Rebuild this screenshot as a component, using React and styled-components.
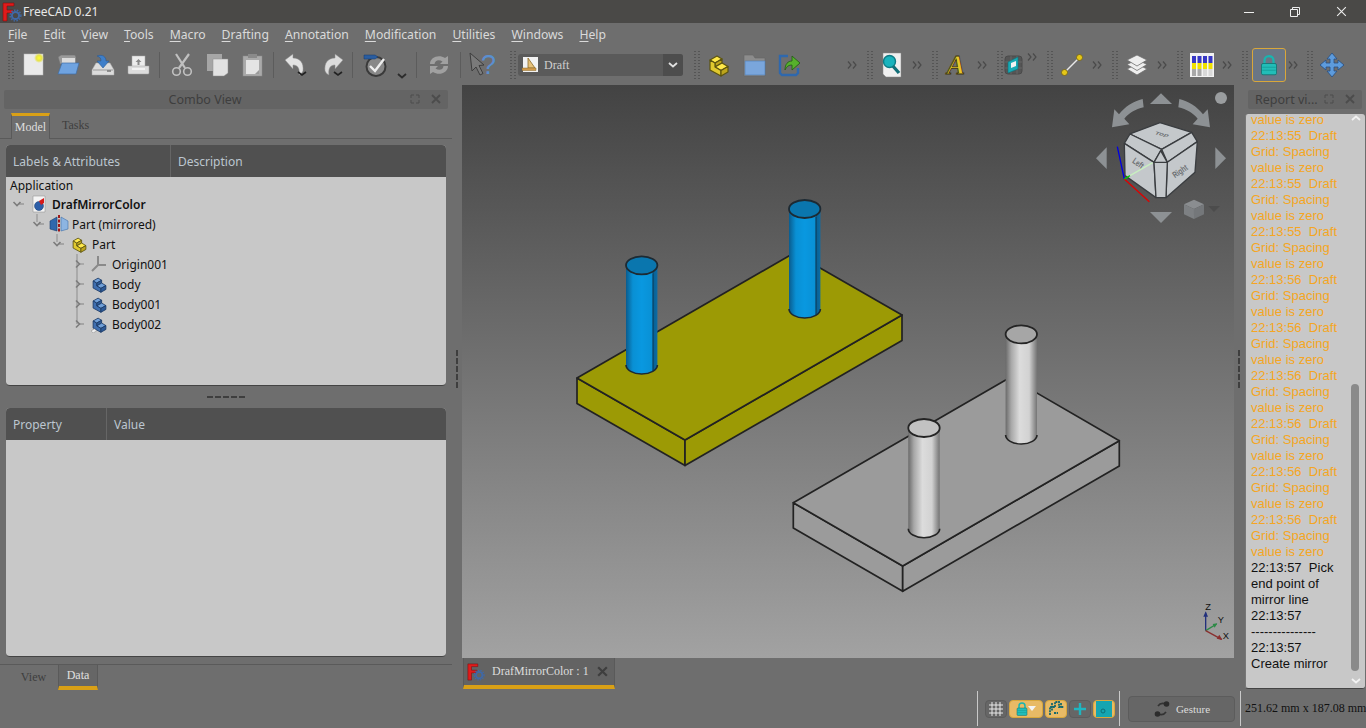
import styled, { createGlobalStyle } from "styled-components";

const GlobalStyle = createGlobalStyle`
  html, body {
    margin: 0;
    padding: 0;
    height: 100%;
    overflow: hidden;
  }
  body {
    background: #6e6e6e;
    font-family: "Noto Sans", "Open Sans", sans-serif;
  }
`;

const Page = styled.div`
  width: 1366px;
  height: 728px;
  display: flex;
  flex-direction: column;
  overflow: hidden;
  background: #6e6e6e;
`;

const TitleBar = styled.div`
  height: 23px;
  flex: none;
  display: flex;
  align-items: center;
  background: #4a4947;
  color: #e8e8e8;
  font-size: 12px;
`;

const TitleLogo = styled.div`
  width: 23px;
  display: flex;
  padding-left: 2px;
  box-sizing: border-box;
`;

const WindowButtons = styled.div`
  margin-left: auto;
  padding-right: 2px;
  display: flex;
`;

const WindowButton = styled.div`
  width: 46px;
  height: 23px;
  display: flex;
  align-items: center;
  justify-content: center;
`;

const MenuBar = styled.div`
  height: 22px;
  flex: none;
  display: flex;
  align-items: center;
  padding-left: 8px;
  gap: 16px;
  color: #dadada;
  font-size: 12.2px;
  u {
    text-underline-offset: 2px;
  }
`;

const ToolBar = styled.div`
  height: 40px;
  flex: none;
  display: flex;
  align-items: center;
  padding-left: 8px;
`;

const ToolGroup = styled.div`
  width: ${({ $w }) => $w}px;
  flex: none;
  height: 100%;
  display: flex;
  align-items: center;
  padding-right: 8px;
  box-sizing: border-box;
`;

const Grip = styled.div`
  width: 6px;
  height: 29px;
  flex: none;
  margin-right: 1px;
  background-image: linear-gradient(#555 50%, transparent 50%),
    linear-gradient(#555 50%, transparent 50%);
  background-size: 2px 3px;
  background-position: 0 0, 4px 0;
  background-repeat: repeat-y;
`;

const ToolButton = styled.div`
  width: ${({ $w }) => $w || 35}px;
  height: 33px;
  flex: none;
  display: flex;
  align-items: ${({ $low }) => ($low ? "flex-end" : "center")};
  justify-content: center;
  box-sizing: border-box;
  border-radius: 3px;
  ${({ $low }) => $low && "padding-bottom: 3px;"}
  ${({ $active }) =>
    $active &&
    `
    background: #6b7685;
    border: 1px solid #d9a73a;
    height: 34px;
    margin-left: 3px;
  `}
`;

const ToolSep = styled.div`
  width: 9px;
  height: 26px;
  flex: none;
  display: flex;
  justify-content: center;
  &::before {
    content: "";
    width: 1px;
    background: #5c5c5c;
  }
`;

const MoreChevrons = styled.div`
  margin-left: auto;
  width: 14px;
  flex: none;
  display: flex;
  justify-content: center;
  margin-bottom: ${({ $raised }) => ($raised ? 16 : 0)}px;
`;

const WorkbenchCombo = styled.div`
  width: 165px;
  height: 22px;
  flex: none;
  margin-left: 1px;
  display: flex;
  align-items: center;
  background: #5a5a5a;
  border-radius: 3px;
  color: #cfcfcf;
  font: 12px "Liberation Serif", serif;
  padding-left: 4px;
  box-sizing: border-box;
  gap: 6px;
`;

const ComboArrow = styled.div`
  margin-left: auto;
  width: 20px;
  height: 22px;
  display: flex;
  align-items: center;
  justify-content: center;
  background: #4d4d4d;
  border-radius: 0 3px 3px 0;
`;

const Main = styled.div`
  flex: 1;
  min-height: 0;
  display: flex;
`;

const LeftDock = styled.div`
  width: 456px;
  flex: none;
  display: flex;
  flex-direction: column;
  padding-top: 5px;
  box-sizing: border-box;
`;

const DockTitle = styled.div`
  height: 19px;
  flex: none;
  margin: ${({ $margin }) => $margin};
  display: flex;
  align-items: center;
  justify-content: ${({ $center }) => ($center ? "center" : "flex-start")};
  position: relative;
  background: #646464;
  border-radius: 2px;
  color: #3e3e3e;
  font-size: 12.5px;
  padding-left: ${({ $center }) => ($center ? 0 : 7)}px;
  padding-right: ${({ $center }) => ($center ? 42 : 0)}px;
`;

const DockButtons = styled.div`
  position: absolute;
  right: 6px;
  top: 3px;
  display: flex;
  gap: 9px;
`;

const TabStrip = styled.div`
  height: 25px;
  flex: none;
  margin: 4px 4px 6px 0;
  padding-left: 11px;
  display: flex;
  gap: 1px;
  border-bottom: 1px solid #5a5a5a;
`;

const TopTab = styled.div`
  width: 39px;
  display: flex;
  align-items: center;
  justify-content: center;
  box-sizing: border-box;
  font: 12px "Liberation Serif", serif;
  color: ${({ $active }) => ($active ? "#dedede" : "#3e3e3e")};
  ${({ $active }) =>
    $active &&
    `
    border-top: 3px solid #d9a016;
    border-left: 1px solid #5a5a5a;
    border-right: 1px solid #5a5a5a;
    margin-bottom: -1px;
    background: #6e6e6e;
  `}
  ${({ $active }) => !$active && "margin-left: 5px;"}
`;

const TablePanel = styled.div`
  flex: none;
  height: ${({ $h }) => $h}px;
  margin: 0 10px 0 6px;
  display: flex;
  flex-direction: column;
  background: #c8c8c8;
  border-radius: 4px;
  border-bottom: 1px solid #444;
  box-sizing: border-box;
  overflow: hidden;
`;

const TableHeader = styled.div`
  height: 32px;
  flex: none;
  display: flex;
  background: #505050;
  color: #bcc6cf;
  font-size: 12px;
`;

const HeaderCell = styled.div`
  width: ${({ $w }) => ($w ? `${$w}px` : "auto")};
  display: flex;
  align-items: center;
  padding-left: 7px;
  box-sizing: border-box;
  border-right: ${({ $w }) => ($w ? "1px solid #666" : "none")};
`;

const TreeBody = styled.div`
  color: #111;
  font-size: 12px;
`;

const TreeRow = styled.div`
  height: ${({ $level }) => ($level === undefined ? 17 : 20)}px;
  display: flex;
  align-items: center;
  padding-left: ${({ $level }) => ($level === undefined ? 4 : 3 + $level * 20)}px;
  font-weight: ${({ $doc }) => ($doc ? 600 : 400)};
`;

const RowIcon = styled.div`
  width: 20px;
  height: 20px;
  flex: none;
  display: flex;
  align-items: center;
  justify-content: center;
  margin-right: 3px;
`;

const PanelSplitter = styled.div`
  height: 22px;
  flex: none;
  display: flex;
  align-items: center;
  justify-content: center;
  padding-right: 4px;
  &::before {
    content: "";
    width: 38px;
    height: 2px;
    background: repeating-linear-gradient(to right, #3e3e3e 0 6px, transparent 6px 8px);
  }
`;

const BottomTabs = styled.div`
  height: 26px;
  flex: none;
  margin-top: 7px;
  padding-left: 9px;
  display: flex;
  border-top: 1px solid #5a5a5a;
  margin-right: 4px;
  box-sizing: border-box;
`;

const BottomTab = styled.div`
  width: ${({ $active }) => ($active ? 40 : 49)}px;
  display: flex;
  align-items: center;
  justify-content: center;
  box-sizing: border-box;
  font: 12px "Liberation Serif", serif;
  color: ${({ $active }) => ($active ? "#e0e0e0" : "#3e3e3e")};
  ${({ $active }) =>
    $active &&
    `
    border-left: 1px solid #5a5a5a;
    border-right: 1px solid #5a5a5a;
    border-bottom: 4px solid #d9a016;
    background: #666;
  `}
`;

const DockSplitter = styled.div`
  width: ${({ $w }) => $w}px;
  flex: none;
  display: flex;
  align-items: center;
  padding: ${({ $pad }) => $pad};
  box-sizing: border-box;
  &::before {
    content: "";
    width: 2px;
    height: 38px;
    margin-bottom: 37px;
    background: repeating-linear-gradient(to bottom, #3e3e3e 0 6px, transparent 6px 8px);
  }
`;

const Center = styled.div`
  width: 772px;
  flex: none;
  display: flex;
  flex-direction: column;
`;

const Viewport = styled.div`
  height: 573px;
  flex: none;
  background: linear-gradient(#434343, #a2a2a2);
  svg {
    display: block;
  }
`;

const ViewTabs = styled.div`
  flex: 1;
  display: flex;
  padding-left: 1px;
`;

const ViewTab = styled.div`
  width: 152px;
  display: flex;
  align-items: center;
  box-sizing: border-box;
  padding: 0 5px 0 3px;
  background: #636363;
  border-bottom: 4px solid #d9a016;
  border-left: 1px solid #5a5a5a;
  border-right: 1px solid #5a5a5a;
  color: #dcdcdc;
  font: 12px "Liberation Serif", serif;
  white-space: nowrap;
  gap: 7px;
`;

const ViewTabLogo = styled.div`
  flex: none;
  display: flex;
`;

const ViewTabClose = styled.div`
  margin-left: auto;
  display: flex;
`;

const RightDock = styled.div`
  width: 121px;
  flex: none;
  display: flex;
  flex-direction: column;
  padding-top: 5px;
  box-sizing: border-box;
`;

const ReportBody = styled.div`
  flex: none;
  position: relative;
  height: 575px;
  margin: 5px 1px 0 0;
  padding-left: 5px;
  background: #c8c8c8;
  border-radius: 3px;
  border-bottom: 1px solid #444;
  border-left: 1px solid #777;
  box-sizing: border-box;
  overflow: hidden;
  font: 13px/16px "Liberation Sans", Arial, sans-serif;
`;

const LogList = styled.div`
  margin-top: -2px;
`;

const LogLine = styled.div`
  white-space: pre;
  color: ${({ $warn }) => ($warn ? "#f5a623" : "#111")};
`;

const ScrollThumb = styled.div`
  position: absolute;
  right: 6px;
  top: 270px;
  width: 8px;
  height: 287px;
  background: #8a8a8a;
  border-radius: 4px;
`;

const ScrollArrow = styled.div`
  position: absolute;
  right: 4px;
  ${({ $down }) => ($down ? "bottom: 4px;" : "top: 1px; transform: rotate(180deg);")}
  display: flex;
`;

const StatusBar = styled.div`
  height: 39px;
  flex: none;
  display: flex;
  align-items: center;
  justify-content: flex-end;
`;

const StatusSep = styled.div`
  width: 1px;
  height: 35px;
  flex: none;
  margin: ${({ $margin }) => $margin};
  background: #c9c9c9;
`;

const StatusButton = styled.div`
  width: ${({ $w }) => $w || 22}px;
  height: 18px;
  flex: none;
  margin-right: 2px;
  display: flex;
  align-items: center;
  justify-content: center;
  box-sizing: border-box;
  border-radius: 4px;
  border: 1px solid ${({ $on }) => ($on ? "#d9a73a" : "#5c5c5c")};
  background: ${({ $on }) => ($on ? "#e8ba66" : "#666")};
`;

const GestureButton = styled.div`
  width: 107px;
  height: 26px;
  flex: none;
  display: flex;
  align-items: center;
  justify-content: center;
  gap: 5px;
  box-sizing: border-box;
  border: 1px solid #5c5c5c;
  border-radius: 4px;
  background: #666;
  color: #dcdcdc;
  font: 11px "Liberation Serif", serif;
`;

const SizeLabel = styled.div`
  width: 121px;
  flex: none;
  color: #111;
  white-space: nowrap;
  font: 12px "Liberation Serif", serif;
`;

/* icons */

const FreeCadLogo = ({ size = 20 }) => (
  <svg width={size} height={size} viewBox="0 0 20 20">
    <path d="M1 1h11v3H5v4h6v3H5v8H1z" fill="#e01b1b" stroke="#7d0d0d" strokeWidth=".6" />
    <circle cx="13.5" cy="13.5" r="3.6" fill="none" stroke="#3f69a8" strokeWidth="2" />
    <circle cx="13.5" cy="13.5" r="5.4" fill="none" stroke="#3f69a8" strokeWidth="1.4" strokeDasharray="1.6 1.3" />
  </svg>
);

const NewIcon = () => (
  <svg width="24" height="24" viewBox="0 0 24 24">
    <defs>
      <radialGradient id="glow">
        <stop offset="0" stopColor="#ffff30" />
        <stop offset=".55" stopColor="#e6e24a" />
        <stop offset="1" stopColor="#e6e24a" stopOpacity="0" />
      </radialGradient>
    </defs>
    <rect x="3" y="1" width="19" height="21" fill="#eaeaea" stroke="#bbb" strokeWidth=".5" />
    <circle cx="18" cy="5" r="5" fill="url(#glow)" />
  </svg>
);

const OpenIcon = () => (
  <svg width="24" height="24" viewBox="0 0 24 24">
    <path d="M2 4l3-2h14l1 2v7H4z" fill="#9a9a9a" stroke="#6e6e6e" strokeWidth=".6" />
    <path d="M6 5h13v5H6z" fill="#dcdcdc" />
    <path d="M6 10h17l-3 11H2z" fill="#6fa3e0" stroke="#3f6ea8" strokeWidth=".7" />
  </svg>
);

const SaveIcon = () => (
  <svg width="24" height="24" viewBox="0 0 24 24">
    <path d="M5 10h14l4 7v5H1v-5z" fill="#dcdcdc" stroke="#aaa" strokeWidth=".5" />
    <path d="M2 17h20" stroke="#999" />
    <path d="M16 18h4" stroke="#777" strokeWidth="1.5" />
    <path d="M6 3c6-2 9 1 9 5h3l-6 7-6-7h4c0-3-1-4-4-5z" fill="#3f7fc9" stroke="#2a5a96" strokeWidth=".6" />
  </svg>
);

const PrintIcon = () => (
  <svg width="24" height="24" viewBox="0 0 24 24">
    <rect x="6" y="3" width="13" height="12" fill="#ececec" stroke="#aaa" strokeWidth=".5" />
    <path d="M12.5 6l3 3h-2v3h-2V9h-2z" fill="#8a8a8a" />
    <path d="M2 13h21v7a1 1 0 0 1-1 1H3a1 1 0 0 1-1-1z" fill="#dcdcdc" stroke="#a0a0a0" strokeWidth=".5" />
    <path d="M6 15h13v2H6z" fill="#f2f2f2" />
  </svg>
);

const CutIcon = () => (
  <svg width="24" height="24" viewBox="0 0 24 24" fill="none" stroke="#c0c0c0">
    <path d="M6 1l9 14M19 1l-10 14" strokeWidth="2.2" />
    <circle cx="6.5" cy="18.5" r="3.8" strokeWidth="1.6" />
    <circle cx="17.5" cy="18.5" r="3.8" strokeWidth="1.6" />
  </svg>
);

const CopyIcon = () => (
  <svg width="24" height="24" viewBox="0 0 24 24">
    <rect x="2" y="1" width="15" height="17" fill="#a6a6a6" />
    <path d="M8 6h15v14l-4 3H8z" fill="#e2e2e2" stroke="#8c8c8c" strokeWidth=".5" />
  </svg>
);

const PasteIcon = () => (
  <svg width="24" height="24" viewBox="0 0 24 24">
    <rect x="3" y="3" width="19" height="20" fill="#aaa" stroke="#8c8c8c" strokeWidth=".5" />
    <rect x="8" y="1" width="9" height="4" fill="#8a8a8a" />
    <rect x="6" y="7" width="13" height="14" fill="#e4e4e4" />
    <path d="M15 21l4-4v4z" fill="#9a9a9a" />
  </svg>
);

const HistoryIcon = ({ flip }) => (
  <svg width="24" height="24" viewBox="0 0 24 24">
    <g transform={flip ? "translate(25 0) scale(-1 1)" : undefined}>
      <path
        d="M1 7l8-6v4c7 0 11 5 10 13-1 2-2 3-4 4 1-6-1-10-6-10v4z"
        fill={flip ? "#dcdcdc" : "#e2e2e2"}
        stroke="#8a8a8a"
        strokeWidth=".5"
      />
    </g>
    <path d={flip ? "M15 19l4 3 4-3" : "M14 19l4 3 4-3"} fill="none" stroke="#222" strokeWidth="1.6" />
  </svg>
);

const CheckIcon = () => (
  <svg width="24" height="24" viewBox="0 0 24 24">
    <circle cx="13" cy="13.5" r="9.5" fill="#888" stroke="#3a3a3a" strokeWidth="2" />
    <path d="M7 13l5 5 9-12" fill="none" stroke="#eee" strokeWidth="2.4" />
    <path d="M1 2h11l3 2-3 2H1z" fill="#2a5da0" stroke="#173a6c" strokeWidth=".5" />
  </svg>
);

const SmallChevron = ({ color = "#2c2c2c", w = 10 }) => (
  <svg width={w} height="6" viewBox="0 0 10 6">
    <path d="M1 1l4 3.5L9 1" fill="none" stroke={color} strokeWidth="1.8" />
  </svg>
);

const RefreshIcon = () => (
  <svg width="24" height="24" viewBox="0 0 24 24" fill="#a0a0a0">
    <path d="M3 11C3 4 12 1 18 5l3-2v8h-8l2.5-2.5C12 6 8 7 7.5 11z" />
    <path d="M21 13c0 7-9 10-15 6l-3 2v-8h8l-2.5 2.5c3.5 2.5 7.5 1.5 8-2.5z" />
  </svg>
);

const WhatsThisIcon = () => (
  <svg width="28" height="32" viewBox="0 0 28 32">
    <path d="M1 4l14 12-5 .5 4 8-3 1.500-4-8-4 4z" fill="#7a7a7a" stroke="#3e3e3e" strokeWidth="1" />
    <text x="12" y="25" fill="#5a8fd0" fontFamily="Liberation Sans" fontSize="27">?</text>
  </svg>
);

const DraftIcon = () => (
  <svg width="16" height="16" viewBox="0 0 16 16">
    <rect x="1" y="0" width="15" height="15" fill="#f2f2f2" />
    <path d="M6 1l7 10H6z" fill="#e7c27a" stroke="#8a6a2a" strokeWidth=".8" />
    <path d="M0 11h14v2.500H0z" fill="#d29a4a" stroke="#8a6a2a" strokeWidth=".5" />
  </svg>
);

const BlockIcon = ({ size = 24, top = "#ffe94a", side = "#e0c92e", dark = "#bda51c", line = "#5c5410", overlay }) => (
  <svg width={size} height={size} viewBox="0 0 24 24" strokeWidth="1.2" stroke={line} strokeLinejoin="round">
    <path d="M3 7l7-4 5 3-7 4z" fill={top} />
    <path d="M8 10l7-4v4l-7 4z" fill={dark} />
    <path d="M8 14l7-4 6 3.500-7 4z" fill={top} />
    <path d="M3 7l5 3v4l6 3.500V23L3 17z" fill={side} />
    <path d="M14 17.500l7-4V19l-7 4z" fill={dark} />
    {overlay && <path d="M0 21l5-3 3 3-5 3z" fill="#eee" stroke="#777" strokeWidth=".6" />}
  </svg>
);

const FolderIcon = () => (
  <svg width="24" height="24" viewBox="0 0 24 24">
    <path d="M2 2h9l2 3h10v18H2z" fill="#8c8c8c" stroke="#666" strokeWidth=".6" />
    <rect x="3" y="8" width="20" height="14" fill="#7aa6dc" stroke="#4f7db2" strokeWidth=".6" />
  </svg>
);

const ExportIcon = () => (
  <svg width="24" height="24" viewBox="0 0 24 24">
    <path d="M11 3H3v17l2 2h14l2-2v-5" fill="none" stroke="#2f68ad" strokeWidth="2.4" />
    <path d="M8 17c0-6 3-9 7-9V3l8 7-8 7v-5c-3 0-5 1-7 5z" fill="#56b02c" stroke="#1f5c12" strokeWidth=".8" />
  </svg>
);

const SearchPageIcon = () => (
  <svg width="24" height="26" viewBox="0 0 24 26">
    <path d="M3 1h18v24H6l-3-3z" fill="#f0f0f0" stroke="#888" strokeWidth=".5" />
    <path d="M12 13l7 8" stroke="#136f78" strokeWidth="3.4" />
    <circle cx="9.5" cy="9.5" r="6" fill="#19b3bd" stroke="#0f7b84" strokeWidth="1.4" />
  </svg>
);

const TextIcon = () => (
  <svg width="32" height="30" viewBox="0 0 32 30">
    <text
      x="15"
      y="24"
      textAnchor="middle"
      fill="#e8c82a"
      stroke="#3c3410"
      strokeWidth=".8"
      fontFamily="Liberation Serif"
      fontStyle="italic"
      fontWeight="700"
      fontSize="27"
    >
      A
    </text>
  </svg>
);

const PlaneIcon = () => (
  <svg width="20" height="20" viewBox="0 0 20 20">
    <rect x="1" y="1" width="17" height="18" rx="3" fill="#555" stroke="#4a4a4a" />
    <path d="M1 7h17M1 13h17M7 1v18M13 1v18" stroke="#777" strokeWidth=".6" />
    <path d="M4 7l10-5v12L4 18z" fill="#17a9b4" stroke="#0e727a" strokeWidth=".6" />
    <path d="M7 8l5-2v5l-5 2z" fill="#f2f2f2" />
  </svg>
);

const LineIcon = () => (
  <svg width="24" height="24" viewBox="0 0 24 24">
    <path d="M5 19L19 5" stroke="#e8e8e8" strokeWidth="1.4" />
    <circle cx="4.5" cy="19.5" r="3" fill="#e5c718" stroke="#6a5a10" strokeWidth=".7" />
    <circle cx="19.5" cy="4.5" r="3" fill="#e5c718" stroke="#6a5a10" strokeWidth=".7" />
  </svg>
);

const LayersIcon = () => (
  <svg width="24" height="24" viewBox="0 0 24 24" fill="#eee" stroke="#6e6e6e" strokeWidth=".8">
    <path d="M2 16l10-5 10 5-10 6z" />
    <path d="M2 11.500l10-5 10 5-10 6z" />
    <path d="M2 7l10-5 10 5-10 6z" />
  </svg>
);

const ColorGridIcon = () => (
  <svg width="24" height="24" viewBox="0 0 24 24">
    <rect width="24" height="24" fill="#f2f2f2" />
    {[2, 7.5, 13, 18.5].map((x) => (
      <g key={x}>
        <rect x={x} y="3" width="4" height="7" fill="#3737c4" />
        <rect x={x} y="10" width="4" height="6" fill="#f0e000" />
        <rect x={x} y="16" width="4" height="7" fill={x > 10 ? "#d8d8d8" : "#a8a8a8"} />
      </g>
    ))}
  </svg>
);

const LockIcon = ({ w = 18, h = 24 }) => (
  <svg width={w} height={h} viewBox="0 0 24 28">
    <path d="M6 13V8a6 6 0 0 1 12 0v5" fill="none" stroke="#19b5b0" strokeWidth="3" />
    <rect x="2" y="12" width="20" height="15" rx="2" fill="#22bdb8" stroke="#0e6f6c" strokeWidth="1" />
    <path d="M3 17h18M3 21h18" stroke="#0e8a86" strokeWidth=".7" />
  </svg>
);

const MoveIcon = () => (
  <svg width="24" height="24" viewBox="0 0 24 24">
    <path
      d="M12 0l5 6h-3v4h4V7l6 5-6 5v-3h-4v4h3l-5 6-5-6h3v-4H6v3l-6-5 6-5v3h4V6H7z"
      fill="#5d9bdc"
      stroke="#284f80"
      strokeWidth=".8"
    />
  </svg>
);

const ChevronsIcon = () => (
  <svg width="10" height="8" viewBox="0 0 10 8" fill="none" stroke="#4a4a4a" strokeWidth="1.2">
    <path d="M1 .5L4 4 1 7.500M6 .5L9 4 6 7.500" />
  </svg>
);

const FloatIcon = () => (
  <svg width="12" height="12" viewBox="0 0 12 12" fill="none" stroke="#4c4c4c">
    <path d="M2 5V2h3M7 2h3v3M10 7v3H7M5 10H2V7" />
  </svg>
);

const CloseIcon = ({ color = "#4c4c4c", size = 12, weight = 1.8 }) => (
  <svg width={size} height={size} viewBox="0 0 12 12" fill="none" stroke={color} strokeWidth={weight}>
    <path d="M2 2l8 8M10 2l-8 8" />
  </svg>
);

const DocIcon = () => (
  <svg width="16" height="18" viewBox="0 0 16 18">
    <path d="M2 1h12v16H2z" fill="#f4f4f4" stroke="#999" strokeWidth=".6" />
    <circle cx="8" cy="11" r="4.5" fill="#2d5ea8" stroke="#173a6c" strokeWidth=".5" />
    <path d="M8 6l5-3v5l-3 2z" fill="#d61a1a" />
  </svg>
);

const MirrorIcon = () => (
  <svg width="20" height="18" viewBox="0 0 20 18">
    <path d="M1 6l7-4v14l-7-2z" fill="#2f68ad" stroke="#173a6c" strokeWidth=".6" />
    <path d="M19 6l-7-4v14l7-2z" fill="#8db5e2" stroke="#3f6ea8" strokeWidth=".6" />
    <path d="M10 0v18" stroke="#a01818" strokeWidth="2" strokeDasharray="3 1.5" />
  </svg>
);

const OriginIcon = () => (
  <svg width="18" height="18" viewBox="0 0 18 18" fill="none" stroke="#8a8a8a" strokeWidth="2">
    <path d="M8 1v9M8 10l8 0M8 10l-6 6" />
  </svg>
);

const Branch = ({ open, up, last }) => (
  <svg width="20" height="20" viewBox="0 0 20 20" fill="none" stroke="#9a9a9a" strokeWidth="1.3">
    {open && up && <path d="M8 0V8" />}
    {!open && <path d={last ? "M8 0v10" : "M8 0v20"} />}
    <path d="M10 10h5" />
    <path
      d={open ? "M4.500 8l3.500 3.500L11.500 8" : "M7 6.500l3.500 3.500L7 13.500"}
      stroke="#7c7c7c"
      strokeWidth="1.6"
    />
  </svg>
);

const GridIcon = () => (
  <svg width="16" height="14" viewBox="0 0 16 14" stroke="#e8e8e8" strokeWidth="1">
    <path d="M1 3h14M1 7h14M1 11h14M4 0v14M8 0v14M12 0v14" />
  </svg>
);

const SnapIcon = () => (
  <svg width="18" height="15" viewBox="0 0 18 15" fill="none" stroke="#16696c" strokeWidth="1.8">
    <path d="M3 14V6h5M5 2v8M8 6V1h4v5h5M14 2v5M7 12h4" strokeDasharray="2 .7" />
  </svg>
);

const PlusIcon = () => (
  <svg width="14" height="14" viewBox="0 0 14 14" stroke="#1fb5c0" strokeWidth="2.4">
    <path d="M7 1v12M1 7h12" />
  </svg>
);

const CubeButtonIcon = () => (
  <svg width="16" height="16" viewBox="0 0 16 16">
    <rect width="16" height="16" fill="#16a5b0" />
    <circle cx="7" cy="10" r="2" fill="none" stroke="#0c6f78" />
  </svg>
);

const GestureIcon = () => (
  <svg width="18" height="18" viewBox="0 0 18 18" fill="none">
    <path d="M5 6c2-3 5-3 8-2" stroke="#333" strokeWidth="1.6" />
    <path d="M13 12c-2 3-5 3-8 2" stroke="#333" strokeWidth="1.6" />
    <circle cx="13.5" cy="4" r="2.8" fill="#2c2c2c" />
    <circle cx="4.5" cy="14" r="2.8" fill="#2c2c2c" />
  </svg>
);

/* 3d scene, coordinates are window pixels */

const Cylinder = ({ cx, top, bottom, rx = 15.7, ry = 9, paint, cap, line, strip }) => (
  <g>
    <path
      d={`M${cx - rx} ${top}V${bottom}A${rx} ${ry} 0 0 0 ${cx + rx} ${bottom}V${top}Z`}
      fill={`url(#${paint})`}
    />
    {strip && <path d={`M${cx + rx * 0.72} ${top + 8}V${bottom + 6}`} stroke="#0b3f5e" strokeWidth="1.2" />}
    <path
      d={`M${cx - rx} ${bottom - 3}A${rx} ${ry} 0 0 0 ${cx + rx} ${bottom - 3}`}
      fill="none"
      stroke={line}
      strokeWidth="1.6"
      transform="translate(0 3)"
    />
    <ellipse cx={cx} cy={top} rx={rx} ry={ry} fill={cap} stroke={line} strokeWidth="1.8" />
  </g>
);

const Slab = ({ left, front, right, back, h, fill }) => (
  <g fill={fill} stroke="#222" strokeWidth="1.7" strokeLinejoin="round">
    <polygon
      points={`${left} ${front} ${front.split(",")[0]},${+front.split(",")[1] + h} ${left.split(",")[0]},${+left.split(",")[1] + h}`}
    />
    <polygon
      points={`${front} ${right} ${right.split(",")[0]},${+right.split(",")[1] + h} ${front.split(",")[0]},${+front.split(",")[1] + h}`}
    />
    <polygon points={`${left} ${back} ${right} ${front}`} />
  </g>
);

const NaviCube = () => (
  <g transform="translate(1080 85) scale(.3333)">
    <g fill="#8d9194">
      <polygon points="210,57 276,57 243,25" />
      <polygon points="80,187 80,252 48,220" />
      <polygon points="406,187 406,252 438,220" />
      <polygon points="210,381 276,381 243,414" />
      <path d="M188 42l3 25c-25 6-44 17-58 34l15 17-52 9 7-54 14 15c18-24 44-39 71-46z" />
      <path d="M298 42l-3 25c25 6 44 17 58 34l-15 17 52 9-7-54-14 15c-18-24-44-39-71-46z" />
      <circle cx="423" cy="39" r="18" fill="#9a9d9f" />
    </g>
    <g fill="#c4c8cb" stroke="#3a3d40" strokeWidth="4" strokeLinejoin="round">
      <polygon points="150,147 240,113 335,142 245,193" />
      <polygon points="133,175 150,147 245,193 222,232" />
      <polygon points="335,142 352,170 262,232 245,193" />
      <polygon points="133,175 222,232 228,338 135,272" />
      <polygon points="352,170 345,262 258,338 262,232" />
      <polygon points="222,232 262,232 258,338 228,338" />
      <polygon points="242,197 262,232 222,232" />
    </g>
    <g fill="#6c7073" fontFamily="Liberation Sans" fontSize="24" fontWeight="700">
      <text transform="translate(222 148) rotate(10) skewX(-30) scale(1 .55)">Top</text>
      <text transform="translate(155 232) rotate(35) scale(.8 1.1)">Left</text>
      <text transform="translate(285 280) rotate(-35) scale(.8 1.1)">Right</text>
    </g>
    <g fill="none" strokeWidth="4">
      <path d="M150 272L218 233" stroke="#c8f0c0" />
      <path d="M133 282L112 185" stroke="#0000e0" />
      <path d="M133 282L208 350" stroke="#e00000" />
      <path d="M133 282L150 272" stroke="#00d000" />
    </g>
    <polygon points="312,358 342,344 372,358 342,372" fill="#8a8d90" />
    <polygon points="312,358 342,372 342,402 312,388" fill="#7d8083" />
    <polygon points="372,358 342,372 342,402 372,388" fill="#74777a" />
    <polygon points="385,363 420,363 402,381" fill="#4c4c4c" />
  </g>
);

const AxisCross = () => (
  <g transform="translate(1190 590) scale(.3333)" fontFamily="Liberation Sans" fontSize="28" fill="#111">
    <path d="M47 122V68" stroke="#22307c" strokeWidth="4" />
    <polygon points="40,80 54,80 47,64" fill="#22307c" />
    <path d="M47 122L80 102" stroke="#2c8a46" strokeWidth="4" />
    <polygon points="68,102 82,100 74,113" fill="#2c8a46" />
    <path d="M47 122L95 148" stroke="#8a2f2f" strokeWidth="4" />
    <polygon points="80,146 97,150 88,134" fill="#8a2f2f" />
    <text x="46" y="60">Z</text>
    <text x="83" y="98">Y</text>
    <text x="98" y="147">X</text>
  </g>
);

const Scene = () => (
  <svg width="772" height="573" viewBox="462 85 772 573">
    <defs>
      <linearGradient id="blueBody">
        <stop offset="0" stopColor="#0a5c8e" />
        <stop offset=".22" stopColor="#0990d4" />
        <stop offset=".5" stopColor="#0998e0" />
        <stop offset=".85" stopColor="#0990d4" />
        <stop offset=".86" stopColor="#0a5f90" />
        <stop offset="1" stopColor="#0a6ca6" />
      </linearGradient>
      <linearGradient id="greyBody">
        <stop offset="0" stopColor="#6a6a6a" />
        <stop offset=".18" stopColor="#a8a8a8" />
        <stop offset=".45" stopColor="#dcdcdc" />
        <stop offset=".75" stopColor="#d2d2d2" />
        <stop offset="1" stopColor="#747474" />
      </linearGradient>
    </defs>
    <Slab left="577,378" front="685,440" right="902,315" back="794,253" h={25.5} fill="#9c9a05" />
    <Cylinder cx={641.7} top={265.3} bottom={365} paint="blueBody" cap="#0a76ae" line="#1d2a33" strip />
    <Cylinder cx={804.7} top={209} bottom={309} paint="blueBody" cap="#0a76ae" line="#1d2a33" strip />
    <Slab left="793.3,502.7" front="902.7,566" right="1119.3,440.7" back="1010,377.4" h={25.3} fill="#9b9b9b" />
    <Cylinder cx={1021.3} top={334.3} bottom={435} paint="greyBody" cap="#a6a6a6" line="#242424" />
    <Cylinder cx={924} top={428} bottom={528.7} paint="greyBody" cap="#c2c2c2" line="#242424" />
    <NaviCube />
    <AxisCross />
  </svg>
);

/* data */

const menus = [
  ["F", "ile"],
  ["E", "dit"],
  ["V", "iew"],
  ["T", "ools"],
  ["M", "acro"],
  ["D", "rafting"],
  ["A", "nnotation"],
  ["M", "odification"],
  ["U", "tilities"],
  ["W", "indows"],
  ["H", "elp"],
];

const bodyColors = { top: "#6f9fd8", side: "#3f6fb0", dark: "#2d5a98", line: "#1b3a66" };

const treeRows = [
  { label: "DrafMirrorColor", level: 0, open: true, icon: <DocIcon />, doc: true },
  { label: "Part (mirrored)", level: 1, open: true, up: true, icon: <MirrorIcon /> },
  { label: "Part", level: 2, open: true, up: true, icon: <BlockIcon size={17} /> },
  { label: "Origin001", level: 3, icon: <OriginIcon /> },
  { label: "Body", level: 3, icon: <BlockIcon size={17} {...bodyColors} /> },
  { label: "Body001", level: 3, icon: <BlockIcon size={17} {...bodyColors} /> },
  { label: "Body002", level: 3, last: true, icon: <BlockIcon size={17} {...bodyColors} overlay /> },
];

const warnTimes = ["55", "55", "55", "56", "56", "56", "56", "56", "56"];

const logLines = [
  { text: "value is zero", warn: true },
  ...warnTimes.flatMap((s) => [
    { text: `22:13:${s}  Draft`, warn: true },
    { text: "Grid: Spacing", warn: true },
    { text: "value is zero", warn: true },
  ]),
  { text: "22:13:57  Pick" },
  { text: "end point of" },
  { text: "mirror line" },
  { text: "22:13:57" },
  { text: "---------------" },
  { text: "22:13:57" },
  { text: "Create mirror" },
];

const SingleTool = ({ w, children, raised }) => (
  <ToolGroup $w={w}>
    <Grip />
    {children}
    <MoreChevrons $raised={raised}>
      <ChevronsIcon />
    </MoreChevrons>
  </ToolGroup>
);

const App = () => (
  <Page>
    <GlobalStyle />
    <TitleBar>
      <TitleLogo>
        <FreeCadLogo />
      </TitleLogo>
      FreeCAD 0.21
      <WindowButtons>
        <WindowButton>
          <svg width="10" height="10" viewBox="0 0 10 10" stroke="#eee">
            <path d="M0 5.5h10" />
          </svg>
        </WindowButton>
        <WindowButton>
          <svg width="10" height="10" viewBox="0 0 10 10" fill="none" stroke="#eee">
            <path d="M.5 2.500h7v7h-7zM2.500 2.500v-2h7v7h-2" />
          </svg>
        </WindowButton>
        <WindowButton>
          <CloseIcon color="#eee" size={13} weight={1} />
        </WindowButton>
      </WindowButtons>
    </TitleBar>

    <MenuBar>
      {menus.map(([key, rest]) => (
        <span key={key + rest}>
          <u>{key}</u>
          {rest}
        </span>
      ))}
    </MenuBar>

    <ToolBar>
      <ToolGroup $w={502}>
        <Grip />
        <ToolButton><NewIcon /></ToolButton>
        <ToolButton><OpenIcon /></ToolButton>
        <ToolButton><SaveIcon /></ToolButton>
        <ToolButton><PrintIcon /></ToolButton>
        <ToolSep />
        <ToolButton><CutIcon /></ToolButton>
        <ToolButton><CopyIcon /></ToolButton>
        <ToolButton><PasteIcon /></ToolButton>
        <ToolSep />
        <ToolButton><HistoryIcon /></ToolButton>
        <ToolButton><HistoryIcon flip /></ToolButton>
        <ToolSep />
        <ToolButton><CheckIcon /></ToolButton>
        <ToolButton $w={20} $low>
          <SmallChevron />
        </ToolButton>
        <ToolSep />
        <ToolButton><RefreshIcon /></ToolButton>
        <ToolSep />
        <ToolButton><WhatsThisIcon /></ToolButton>
      </ToolGroup>
      <ToolGroup $w={184}>
        <Grip />
        <WorkbenchCombo>
          <DraftIcon />
          Draft
          <ComboArrow>
            <SmallChevron color="#e0e0e0" />
          </ComboArrow>
        </WorkbenchCombo>
      </ToolGroup>
      <SingleTool w={173}>
        <ToolButton><BlockIcon /></ToolButton>
        <ToolButton><FolderIcon /></ToolButton>
        <ToolButton><ExportIcon /></ToolButton>
      </SingleTool>
      <SingleTool w={65}><ToolButton><SearchPageIcon /></ToolButton></SingleTool>
      <SingleTool w={65}><ToolButton><TextIcon /></ToolButton></SingleTool>
      <SingleTool w={50} raised><ToolButton $w={20}><PlaneIcon /></ToolButton></SingleTool>
      <SingleTool w={65}><ToolButton><LineIcon /></ToolButton></SingleTool>
      <SingleTool w={65}><ToolButton><LayersIcon /></ToolButton></SingleTool>
      <SingleTool w={65}><ToolButton><ColorGridIcon /></ToolButton></SingleTool>
      <SingleTool w={65}>
        <ToolButton $w={34} $active>
          <LockIcon />
        </ToolButton>
      </SingleTool>
      <ToolGroup $w={59}>
        <Grip />
        <ToolButton><MoveIcon /></ToolButton>
      </ToolGroup>
    </ToolBar>

    <Main>
      <LeftDock>
        <DockTitle $center $margin="0 8px 0 4px">
          Combo View
          <DockButtons>
            <FloatIcon />
            <CloseIcon />
          </DockButtons>
        </DockTitle>
        <TabStrip>
          <TopTab $active>Model</TopTab>
          <TopTab>Tasks</TopTab>
        </TabStrip>
        <TablePanel $h={241}>
          <TableHeader>
            <HeaderCell $w={165}>Labels &amp; Attributes</HeaderCell>
            <HeaderCell>Description</HeaderCell>
          </TableHeader>
          <TreeBody>
            <TreeRow>Application</TreeRow>
            {treeRows.map((row) => (
              <TreeRow key={row.label} $level={row.level} $doc={row.doc}>
                <Branch open={row.open} up={row.up} last={row.last} />
                <RowIcon>{row.icon}</RowIcon>
                {row.label}
              </TreeRow>
            ))}
          </TreeBody>
        </TablePanel>
        <PanelSplitter />
        <TablePanel $h={249}>
          <TableHeader>
            <HeaderCell $w={101}>Property</HeaderCell>
            <HeaderCell>Value</HeaderCell>
          </TableHeader>
        </TablePanel>
        <BottomTabs>
          <BottomTab>View</BottomTab>
          <BottomTab $active>Data</BottomTab>
        </BottomTabs>
      </LeftDock>

      <DockSplitter $w={6} $pad="0 0 0 0" />

      <Center>
        <Viewport>
          <Scene />
        </Viewport>
        <ViewTabs>
          <ViewTab>
            <ViewTabLogo>
              <FreeCadLogo size={18} />
            </ViewTabLogo>
            DrafMirrorColor : 1
            <ViewTabClose>
              <CloseIcon color="#3e3e3e" size={13} weight={2} />
            </ViewTabClose>
          </ViewTab>
        </ViewTabs>
      </Center>

      <DockSplitter $w={11} $pad="0 0 0 4px" />

      <RightDock>
        <DockTitle $margin="0 4px 0 3px">
          Report vi...
          <DockButtons>
            <FloatIcon />
            <CloseIcon />
          </DockButtons>
        </DockTitle>
        <ReportBody>
          <LogList>
            {logLines.map((line, i) => (
              <LogLine key={i} $warn={line.warn}>
                {line.text}
              </LogLine>
            ))}
          </LogList>
          <ScrollArrow>
            <SmallChevron color="#f2f2f2" />
          </ScrollArrow>
          <ScrollThumb />
          <ScrollArrow $down>
            <SmallChevron color="#f2f2f2" />
          </ScrollArrow>
        </ReportBody>
      </RightDock>
    </Main>

    <StatusBar>
      <StatusSep $margin="0 7px 0 0" />
      <StatusButton><GridIcon /></StatusButton>
      <StatusButton $w={34} $on>
        <LockIcon w={12} h={14} />
        <svg width="8" height="5" viewBox="0 0 8 5"><path d="M0 0h8L4 5z" fill="#f4f4f4" /></svg>
      </StatusButton>
      <StatusButton $on><SnapIcon /></StatusButton>
      <StatusButton><PlusIcon /></StatusButton>
      <StatusButton $on><CubeButtonIcon /></StatusButton>
      <StatusSep $margin="0 8px 0 2px" />
      <GestureButton>
        <GestureIcon />
        Gesture
      </GestureButton>
      <StatusSep $margin="0 4px 0 5px" />
      <SizeLabel>251.62 mm x 187.08 mm</SizeLabel>
    </StatusBar>
  </Page>
);

export default App;
